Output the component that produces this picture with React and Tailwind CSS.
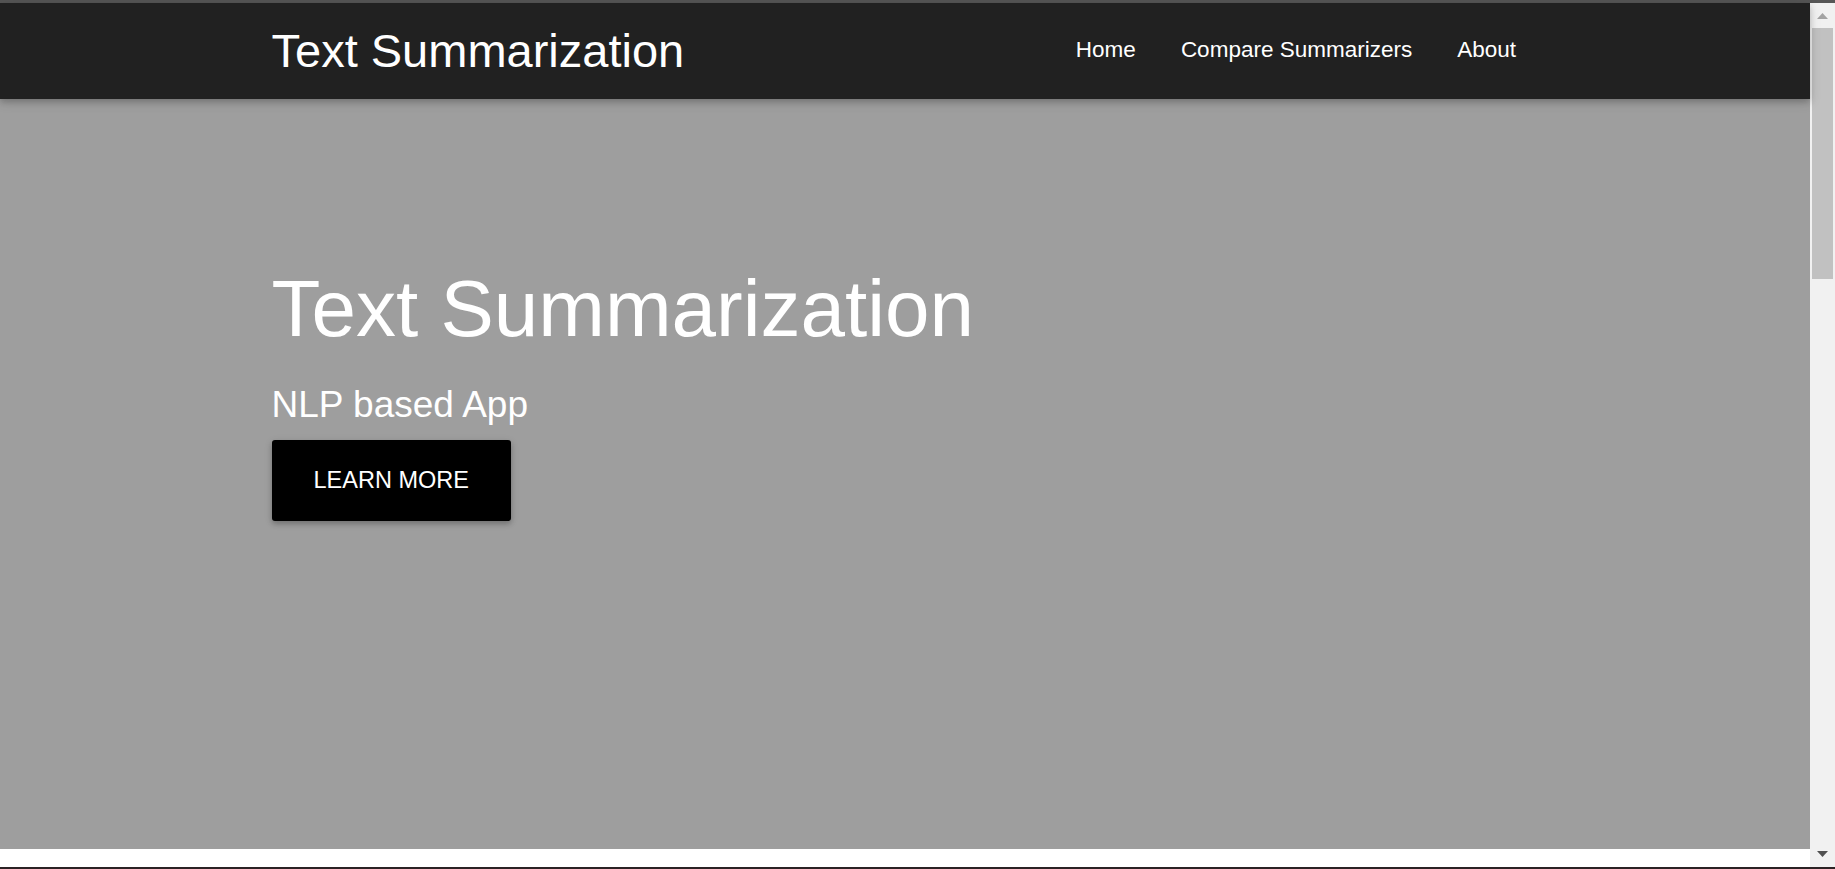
import React from "react";

export default function App() {
  return (
    <div className="w-[1835px] h-[869px] overflow-hidden flex flex-col bg-white font-['Liberation_Sans',Arial,sans-serif]">
      <div className="h-[3px] bg-[#565656] shrink-0" />
      <div className="flex flex-1 min-h-0">
        <div className="flex-1 min-w-0 flex flex-col">
          <nav className="h-[96px] shrink-0 bg-[#212121] relative z-10 shadow-[0_3px_6px_0_rgba(0,0,0,0.18),0_3px_12px_0_rgba(0,0,0,0.12)]">
            <div className="w-[70%] mx-auto h-full flex items-center justify-between">
              <a className="text-[47px] leading-none text-white -mt-[2px]">Text Summarization</a>
              <ul className="flex items-center -mt-[2px]">
                <li><a className="block px-[22.5px] text-[22.5px] leading-none text-white">Home</a></li>
                <li><a className="block px-[22.5px] text-[22.5px] leading-none text-white">Compare Summarizers</a></li>
                <li><a className="block px-[22.5px] text-[22.5px] leading-none text-white">About</a></li>
              </ul>
            </div>
          </nav>
          <section className="h-[750px] shrink-0 bg-[#9e9e9e] pt-[170px]">
            <div className="w-[70%] mx-auto flex flex-col items-start">
              <h1 className="text-[80px] leading-[80px] text-white">Text Summarization</h1>
              <h5 className="mt-[37px] text-[37px] leading-[37px] text-white">NLP based App</h5>
              <button className="mt-[17px] h-[81px] px-[42px] rounded-[3px] bg-black text-white text-[23.5px] leading-none flex items-center shadow-[0_3px_5px_0_rgba(0,0,0,0.2),0_2px_8px_0_rgba(0,0,0,0.12)]">
                LEARN MORE
              </button>
            </div>
          </section>
          <div className="flex-1 bg-white" />
        </div>
        <div className="w-[25px] shrink-0 bg-[#f1f1f1] flex flex-col">
          <div className="h-[25px] shrink-0 flex items-start justify-center pt-[10px]">
            <svg width="11" height="6" viewBox="0 0 11 6">
              <polygon points="5.5,0 11,6 0,6" fill="#a3a3a3" />
            </svg>
          </div>
          <div className="h-[251px] mx-[2px] bg-[#c1c1c1]" />
          <div className="flex-1" />
          <div className="h-[25px] shrink-0 flex items-start justify-center pt-[9px]">
            <svg width="11" height="6" viewBox="0 0 11 6">
              <polygon points="0,0 11,0 5.5,6" fill="#505050" />
            </svg>
          </div>
        </div>
      </div>
      <div className="h-[2px] bg-[#2b2224] shrink-0" />
    </div>
  );
}
